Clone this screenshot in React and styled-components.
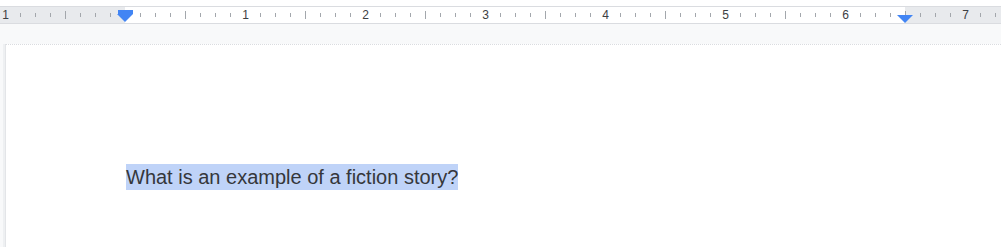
import React from "react";
import styled, { createGlobalStyle } from "styled-components";

const Global = createGlobalStyle`
  html, body { margin: 0; padding: 0; background: #f8f9fa; }
  body { font-family: Arial, "Liberation Sans", sans-serif; overflow: hidden; }
`;

const Shell = styled.div`
  width: 1001px;
  height: 247px;
  display: flex;
  flex-direction: column;
  background: #f8f9fa;
  overflow: hidden;
`;

const TopStrip = styled.div`
  height: 6px;
  background: #ffffff;
`;

const Ruler = styled.div`
  position: relative;
  height: 16px;
  border-top: 1px solid #dadce0;
  border-bottom: 1px solid #dadce0;
  background: linear-gradient(
    to right,
    #e8eaed 0,
    #e8eaed 125px,
    #ffffff 125px,
    #ffffff 905px,
    #e8eaed 905px
  );
  overflow: hidden;
`;

const Track = styled.div`
  display: flex;
  height: 100%;
  margin-left: -2px;
`;

const Cell = styled.div`
  flex: 0 0 15px;
  width: 15px;
  height: 100%;
  display: flex;
  align-items: center;
  justify-content: center;
`;

const Tick = styled.div`
  width: 1px;
  height: ${(p) => (p.$big ? 8 : 4)}px;
  background: #a3a7ac;
`;

const Num = styled.span`
  font-family: Arial, "Liberation Sans", sans-serif;
  font-size: 12px;
  line-height: 16px;
  color: #3c4043;
  white-space: nowrap;
`;

const IndentMarker = styled.div`
  position: absolute;
  top: ${(p) => p.$y}px;
  left: ${(p) => p.$x}px;
  width: 16px;
  display: flex;
  flex-direction: column;
  align-items: center;
`;

const IndentBar = styled.div`
  width: 15px;
  height: 4px;
  background: #4285f4;
`;

const IndentTri = styled.div`
  width: 0;
  height: 0;
  border-left: 8px solid transparent;
  border-right: 8px solid transparent;
  border-top: 8px solid #4285f4;
`;

const Canvas = styled.div`
  flex: 1;
  padding-top: 20px;
  display: flex;
`;

const Page = styled.div`
  flex: 1;
  margin-left: 5px;
  background: #ffffff;
  border-top: 1px dotted #dadce0;
  border-left: 1px solid #e3e5e8;
  box-shadow: -2px 0 0 #eef0f2;
  padding: 119px 0 0 120px;
`;

const Line = styled.p`
  margin: 0;
  font-family: Arial, "Liberation Sans", sans-serif;
  font-size: 20px;
  line-height: 26px;
  color: #35373b;
`;

const Selected = styled.span`
  display: inline-block;
  background: #bfd3f8;
  line-height: 26px;
`;

const cells = Array.from({ length: 70 }, (_, k) => k);

function RulerCell({ k }) {
  const inch = k - 8;
  if (k % 8 === 0) {
    if (inch === 0) return <Cell />;
    return (
      <Cell>
        <Num>{Math.abs(inch / 8)}</Num>
      </Cell>
    );
  }
  return (
    <Cell>
      <Tick $big={k % 8 === 4} />
    </Cell>
  );
}

export default function App() {
  return (
    <>
      <Global />
      <Shell>
        <TopStrip />
        <Ruler>
          <Track>
            {cells.map((k) => (
              <RulerCell key={k} k={k} />
            ))}
          </Track>
          <IndentMarker $x={117} $y={3}>
            <IndentBar />
            <IndentTri />
          </IndentMarker>
          <IndentMarker $x={897} $y={8}>
            <IndentTri />
          </IndentMarker>
        </Ruler>
        <Canvas>
          <Page>
            <Line>
              <Selected>What is an example of a fiction story?</Selected>
            </Line>
          </Page>
        </Canvas>
      </Shell>
    </>
  );
}
